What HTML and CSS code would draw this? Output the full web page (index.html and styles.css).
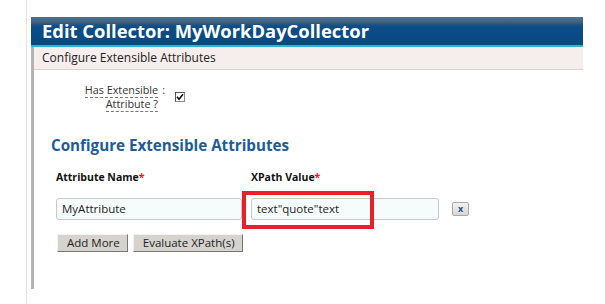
FILE: index.html
```html
<!DOCTYPE html>
<html>
<head>
<meta charset="utf-8">
<link rel="stylesheet" href="styles.css">
</head>
<body>
<div class="page">
  <div class="frame">
    <div class="header">Edit Collector: MyWorkDayCollector</div>
    <div class="panel">
      <div class="subheader">Configure Extensible Attributes</div>
      <div class="ext-row">
        <div class="ext-label">
          <div class="line1"><span class="dotted">Has Extensible</span><span class="colon">:</span></div>
          <div class="line2"><span class="dotted">Attribute ?</span></div>
        </div>
        <span class="check"><svg width="8" height="8" viewBox="0 0 8 8"><path d="M1 3.8 L3 6.2 L7 1.2" fill="none" stroke="#111" stroke-width="1.6"/></svg></span>
      </div>
      <h2 class="section-title">Configure Extensible Attributes</h2>
      <div class="attr-grid">
        <div class="col-label">Attribute Name<span class="req">*</span></div>
        <div class="col-label">XPath Value<span class="req">*</span></div>
        <div></div>
        <div class="field">MyAttribute</div>
        <div class="field">text"quote"text<span class="highlight"></span></div>
        <div class="remove-cell"><span class="remove">x</span></div>
      </div>
      <div class="buttons">
        <span class="btn">Add More</span>
        <span class="btn">Evaluate XPath(s)</span>
      </div>
    </div>
  </div>
</div>
</body>
</html>
```
FILE: styles.css
```css
html, body {
  margin: 0;
  padding: 0;
  background: #fff;
}
body {
  font-family: "Open Sans", "DejaVu Sans", sans-serif;
  color: #222;
}
.page {
  width: 605px;
  height: 304px;
  padding-left: 26px;
  box-sizing: border-box;
  overflow: hidden;
}
.frame {
  height: 304px;
  width: 557px;
  border-left: 1px solid #e4e4e4;
  padding-left: 4px;
  padding-top: 17px;
  box-sizing: border-box;
}
.header {
  height: 28px;
  border-bottom: 2px solid #2fb4d2;
  background: linear-gradient(#52738f 0, #3f6281 5px, #1b5183 8px, #0b4d88 10px, #08497f 100%);
  color: #fff;
  font-weight: bold;
  font-size: 18.4px;
  line-height: 28px;
  padding-left: 11px;
}
.panel {
  border-left: 3px solid #b3b3b3;
  height: 242px;
  box-sizing: border-box;
}
.subheader {
  background: #f6eded;
  border-bottom: 1px solid #d4d4d4;
  height: 22px;
  line-height: 22px;
  font-size: 12px;
  padding-left: 8px;
  color: #222;
}
.ext-row {
  display: flex;
  align-items: flex-start;
  margin-top: 13px;
  padding-left: 46px;
}
.ext-label {
  width: 85px;
  text-align: right;
  font-size: 10.8px;
  line-height: 14px;
  color: #333;
}
.line2 {
  padding-right: 7px;
}
.dotted {
  border-bottom: 1px dashed #777;
}
.colon {
  margin-left: 4px;
}
.check {
  margin-left: 10px;
  margin-top: 9px;
  width: 8px;
  height: 8px;
  border: 1px solid #8a8a8a;
  border-top-color: #555;
  border-left-color: #555;
  background: #fff;
  display: flex;
  align-items: center;
  justify-content: center;
}
.section-title {
  margin: 24px 0 0 17px;
  font-size: 15.2px;
  font-weight: bold;
  color: #1c5c99;
  line-height: 20px;
}
.attr-grid {
  display: grid;
  grid-template-columns: 186px 188px 40px;
  column-gap: 9px;
  row-gap: 14px;
  margin: 15px 0 0 22px;
  align-items: center;
}
.col-label {
  font-size: 10.5px;
  font-weight: bold;
  color: #111;
  line-height: 14px;
}
.req {
  color: #e01b1b;
}
.field {
  position: relative;
  height: 20px;
  border: 1px solid #c5c9c9;
  border-radius: 3px;
  background: #f6fcfc;
  font-size: 11.5px;
  line-height: 20px;
  padding-left: 5px;
  color: #222;
}
.highlight {
  position: absolute;
  left: -10px;
  top: -8px;
  width: 124px;
  height: 30px;
  border: 4px solid #e8202a;
}
.remove-cell {
  display: flex;
  align-items: center;
  padding-left: 4px;
}
.remove {
  width: 15px;
  height: 12px;
  border: 1px solid #a8a8a8;
  border-radius: 2px;
  background: linear-gradient(#f2f2f2, #d8d8d8);
  color: #1b4f8a;
  font-size: 9px;
  font-weight: bold;
  line-height: 11px;
  text-align: center;
}
.buttons {
  display: flex;
  gap: 5px;
  margin: 14px 0 0 23px;
}
.btn {
  background: #d6d3ce;
  border: 1px solid;
  border-color: #f4f4f4 #777 #777 #f4f4f4;
  font-size: 11.5px;
  line-height: 16px;
  padding: 0 7px 0 9px;
  color: #222;
}
```
